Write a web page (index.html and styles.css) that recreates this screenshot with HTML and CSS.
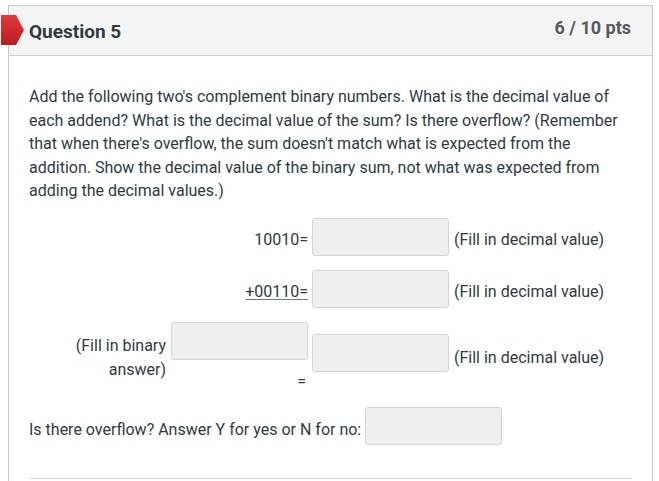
FILE: index.html
```html
<!DOCTYPE html>
<html lang="en">
<head>
<meta charset="utf-8">
<title>Question 5</title>
<link rel="stylesheet" href="styles.css">
</head>
<body>
<div class="card">
  <svg class="flag" width="23" height="30" viewBox="0 0 23 30" aria-hidden="true">
    <defs>
      <linearGradient id="fg" x1="0" y1="0" x2="0" y2="1">
        <stop offset="0" stop-color="#e5383b"/>
        <stop offset="1" stop-color="#b81d22"/>
      </linearGradient>
    </defs>
    <polygon points="0,0 15,0 23,15 15,30 0,30" fill="url(#fg)"/>
  </svg>
  <div class="header">
    <div class="title">Question 5</div>
    <div class="pts">6 / 10 pts</div>
  </div>
  <div class="body">
    <p class="intro">Add the following two's complement binary numbers. What is the decimal value of each addend? What is the decimal value of the sum? Is there overflow? (Remember that when there's overflow, the sum doesn't match what is expected from the addition. Show the decimal value of the binary sum, not what was expected from adding the decimal values.)</p>
    <table class="sum">
      <colgroup>
        <col class="c-a"><col class="c-b"><col class="c-c"><col class="c-d">
      </colgroup>
      <tr>
        <td></td>
        <td class="right low">10010=</td>
        <td><span class="box"></span></td>
        <td class="low">(Fill in decimal value)</td>
      </tr>
      <tr>
        <td></td>
        <td class="right low"><span class="ul">+00110=</span></td>
        <td><span class="box"></span></td>
        <td class="low">(Fill in decimal value)</td>
      </tr>
      <tr>
        <td class="right">(Fill in binary answer)</td>
        <td class="right"><span class="box block"></span><div class="eq">=</div></td>
        <td><span class="box raised"></span></td>
        <td>(Fill in decimal value)</td>
      </tr>
    </table>
    <div class="overflow">
      <span class="ov-text">Is there overflow? Answer Y for yes or N for no:</span>
      <span class="box"></span>
    </div>
    <div class="sep"></div>
  </div>
</div>
</body>
</html>
```
FILE: styles.css
```css
html, body {
  margin: 0;
  padding: 0;
  background: #ffffff;
}
body {
  font-family: Roboto, "Liberation Sans", Arial, sans-serif;
  color: #2d3b45;
  overflow: hidden;
}
.card {
  position: relative;
  margin: 5px 0 0 8px;
  width: 645px;
  box-sizing: border-box;
  border: 1px solid #c8c8c8;
  border-bottom: none;
  min-height: 480px;
}
.flag {
  position: absolute;
  left: -8px;
  top: 9px;
  display: block;
}
.header {
  display: flex;
  justify-content: space-between;
  align-items: flex-start;
  height: 49px;
  background: #f4f4f4;
  border-bottom: 1px solid #cfcfcf;
  padding: 0 21px 0 20px;
}
.title {
  font-size: 19px;
  line-height: 24px;
  font-weight: 700;
  color: #2d3b45;
  margin-top: 14px;
}
.pts {
  font-size: 18px;
  line-height: 24px;
  font-weight: 700;
  color: #555a5e;
  margin-top: 10px;
}
.body {
  padding: 29px 20px 0 20px;
}
.intro {
  margin: 0 0 8px 0;
  font-size: 16px;
  line-height: 23.6px;
}
.sum {
  width: 100%;
  table-layout: fixed;
  border-collapse: collapse;
  border-spacing: 0;
  font-size: 16px;
  line-height: 24px;
}
.c-a { width: 139px; }
.c-b { width: 142px; }
.c-c { width: 141px; }
.sum td {
  padding: 7px 2px;
  vertical-align: middle;
}
.sum td.right { text-align: right; }
.sum td.low { padding-top: 13px; padding-bottom: 7px; }
.sum td:last-child { padding-left: 3px; }
.ul {
  text-decoration: underline;
  text-decoration-color: #777;
  text-underline-offset: 2px;
}
.box {
  display: inline-block;
  vertical-align: middle;
  width: 137px;
  height: 38px;
  box-sizing: border-box;
  background: #efefef;
  border: 1px solid #d4d4d4;
  border-radius: 3px;
}
.box.block {
  display: block;
  margin-left: auto;
}
.box.raised {
  margin-bottom: 10px;
}
.eq {
  margin-top: 10px;
  line-height: 24px;
  padding-right: 2px;
}
.overflow {
  display: flex;
  align-items: center;
  gap: 4px;
  margin-top: 6px;
  font-size: 16px;
  line-height: 24px;
}
.ov-text {
  padding-top: 9px;
}
.sep {
  margin-top: 33px;
  border-top: 1px solid #d6d6d6;
}
```
